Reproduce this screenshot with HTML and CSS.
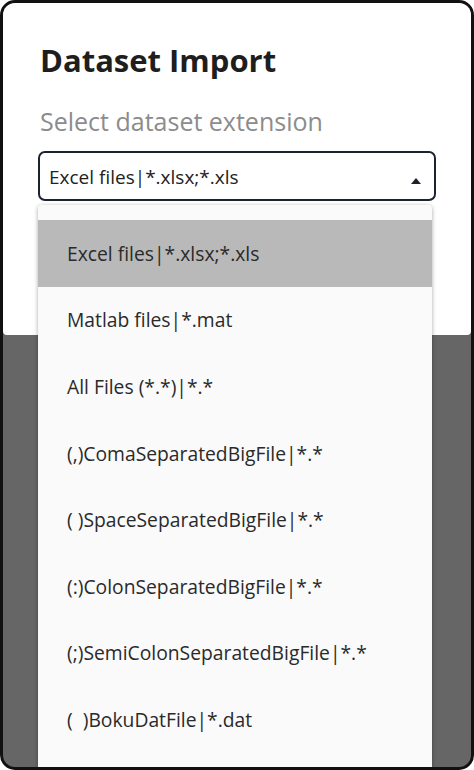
FILE: index.html
```html
<!DOCTYPE html>
<html>
<head>
<meta charset="utf-8">
<link rel="stylesheet" href="styles.css">
</head>
<body>
<div class="frame">
  <div class="dialog">
    <h1 class="title">Dataset Import</h1>
    <div class="subtitle">Select dataset extension</div>
    <div class="select">
      <span class="select-value">Excel files|*.xlsx;*.xls</span>
      <svg class="caret" width="10" height="6" viewBox="0 0 10 6"><path d="M0 6 L5 0 L10 6 Z" fill="#1b2230"/></svg>
    </div>
  </div>
  <ul class="menu">
    <li class="item selected">Excel files|*.xlsx;*.xls</li>
    <li class="item">Matlab files|*.mat</li>
    <li class="item">All Files (*.*)|*.*</li>
    <li class="item">(,)ComaSeparatedBigFile|*.*</li>
    <li class="item">( )SpaceSeparatedBigFile|*.*</li>
    <li class="item">(:)ColonSeparatedBigFile|*.*</li>
    <li class="item">(;)SemiColonSeparatedBigFile|*.*</li>
    <li class="item">(&nbsp;&nbsp;)BokuDatFile|*.dat</li>
  </ul>
</div>
</body>
</html>
```

FILE: styles.css
```css
* { box-sizing: border-box; }
html, body {
  margin: 0;
  padding: 0;
  background: #ffffff;
}
body {
  width: 474px;
  height: 770px;
  font-family: "Open Sans", "Noto Sans", sans-serif;
}
.frame {
  position: relative;
  width: 474px;
  height: 770px;
  border: 3px solid #111111;
  border-radius: 15px;
  background: #666666;
  overflow: hidden;
}
.dialog {
  background: #ffffff;
  height: 332px;
  padding: 37px 35px 0 35px;
  border-radius: 0 0 4px 4px;
}
.title {
  margin: 0 0 0 2px;
  font-size: 31px;
  line-height: 40px;
  font-weight: 700;
  color: #1e1e1e;
}
.subtitle {
  margin: 26px 0 0 2px;
  font-size: 25px;
  line-height: 30px;
  color: #8c8c8c;
}
.select {
  margin-top: 15px;
  height: 50px;
  border: 2px solid #1b2230;
  border-radius: 7px;
  padding: 0 9px 0 9px;
  display: flex;
  align-items: center;
  justify-content: space-between;
}
.select-value {
  font-size: 19px;
  color: #222222;
  padding-top: 2px;
}
.caret {
  margin-right: 4px;
  margin-top: 9px;
}
.menu {
  position: absolute;
  top: 202px;
  left: 35px;
  width: 394px;
  bottom: 0;
  margin: 0;
  padding: 15px 0 0 0;
  list-style: none;
  background: #fafafa;
  border-radius: 4px 4px 0 0;
  box-shadow: 0 1px 4px rgba(0, 0, 0, 0.35);
}
.item {
  height: 66.6px;
  padding-left: 29px;
  display: flex;
  align-items: center;
  font-size: 19.3px;
  color: #2a2a2a;
}
.item.selected {
  background: #b9b9b9;
}
```
